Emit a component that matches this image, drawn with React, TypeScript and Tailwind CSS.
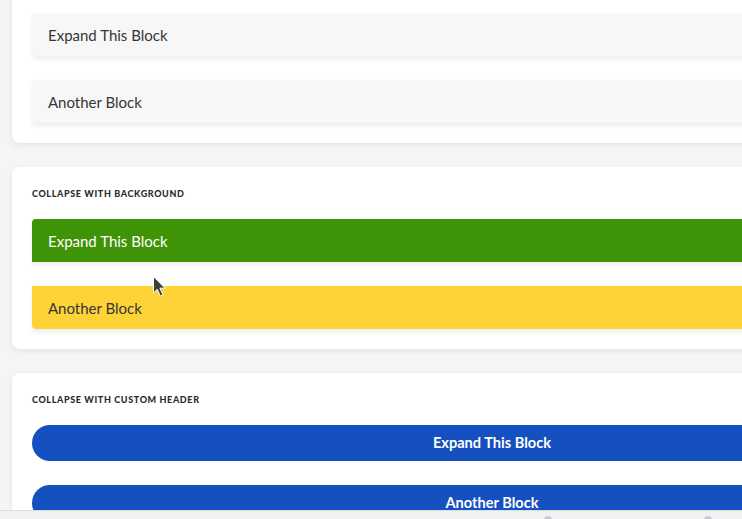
import React from 'react';

type Item = { title: string; className: string };

function Card({ heading, items, pill }: { heading?: string; items: Item[]; pill?: boolean }) {
  return (
    <div className="bg-white rounded-lg shadow-[0_2px_6px_rgba(0,0,0,0.08)] p-5">
      {heading ? (
        <h3 className="text-[9px] leading-[14px] font-black tracking-[0.07em] uppercase text-[#2b2b2b] mb-[18px]">
          {heading}
        </h3>
      ) : (
        <div className="h-8" />
      )}
      <div className="flex flex-col gap-6">
        {items.map((item) => (
          <div
            key={item.title}
            className={
              pill
                ? 'h-9 rounded-full bg-[#1550c0] text-white font-bold text-[14.6px] flex items-center justify-center pb-px'
                : 'h-[43px] px-4 pt-[2px] flex items-center text-[15px] shadow-[0_3px_5px_rgba(0,0,0,0.07)] ' + item.className
            }
          >
            {item.title}
          </div>
        ))}
      </div>
    </div>
  );
}

export default function App() {
  return (
    <div
      className="relative w-full h-[519px] overflow-hidden bg-[#f5f5f5]"
      style={{ fontFamily: 'Lato, "Noto Sans", sans-serif' }}
    >
      <div className="w-[960px] ml-3 mt-[-39px] flex flex-col gap-6">
        <Card
          items={[
            { title: 'Expand This Block', className: 'bg-[#f7f7f7] text-[#363636] rounded' },
            { title: 'Another Block', className: 'bg-[#f7f7f7] text-[#363636] rounded' },
          ]}
        />
        <Card
          heading="Collapse with background"
          items={[
            { title: 'Expand This Block', className: 'bg-[#3f9307] text-white rounded-t' },
            { title: 'Another Block', className: 'bg-[#fed337] text-[#363636] rounded-b' },
          ]}
        />
        <Card
          heading="Collapse with custom header"
          pill
          items={[
            { title: 'Expand This Block', className: '' },
            { title: 'Another Block', className: '' },
          ]}
        />
      </div>

      {/* bottom bar */}
      <div className="absolute left-0 right-0 bottom-0 h-[9px] bg-[#f0f1f3] border-t border-[#dcdde0]">
        <span className="absolute left-[544px] top-[5px] w-2 h-2 rounded-full bg-[#c9cacd]" />
        <span className="absolute left-[704px] top-[5px] w-2 h-2 rounded-full bg-[#c9cacd]" />
      </div>

      {/* mouse pointer */}
      <svg className="absolute left-[152px] top-[275px]" width="15" height="23" viewBox="0 0 15 23">
        <path d="M1.5 1.5 L1.5 18 L5.2 14.3 L8.3 21 L11 19.8 L7.9 13.2 L13 13.2 Z" fill="#404040" stroke="#ffffff" strokeWidth="1" />
      </svg>
    </div>
  );
}
